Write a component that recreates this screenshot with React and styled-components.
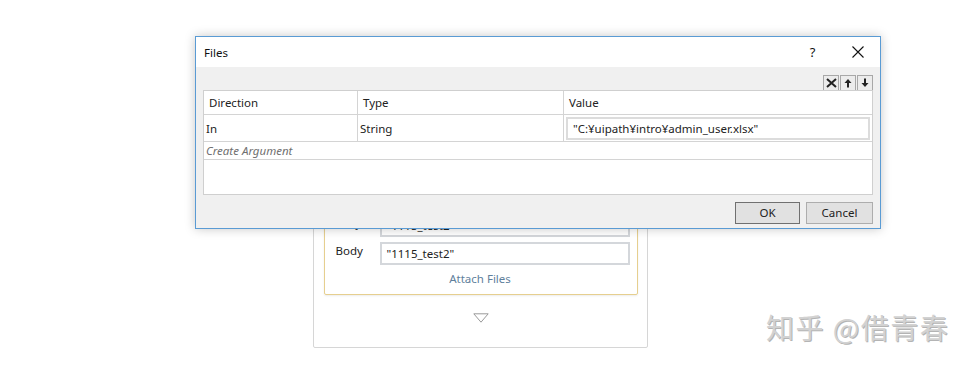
import styled, { createGlobalStyle } from 'styled-components'

const Global = createGlobalStyle`
  body { margin: 0; background: #fff; font-family: "Noto Sans", "Open Sans", sans-serif; }
`

const Page = styled.div`
  position: relative;
  width: 974px;
  height: 366px;
  overflow: hidden;
  background: #fff;
`

const Designer = styled.div`
  display: flex;
  padding: 190px 0 0 313px;
`

const Activity = styled.div`
  width: 335px;
  height: 158px;
  border: 1px solid #d6d6d6;
  border-radius: 2px;
  padding: 4px 10px 0 10px;
  box-sizing: border-box;
  display: flex;
  flex-direction: column;
  align-items: center;
`

const Inner = styled.div`
  width: 314px;
  border: 1px solid #e6cf8f;
  border-radius: 2px;
  box-sizing: border-box;
  padding: 18px 6px 8px 11px;
  display: flex;
  flex-direction: column;
  gap: 5px;
  box-shadow: 0 1px 2px rgba(0,0,0,0.08);
`

const FieldRow = styled.div`
  display: flex;
  align-items: center;
`

const FieldLabel = styled.div`
  width: 44px;
  font-size: 11.5px;
  color: #222;
  margin-top: -6px;
`

const FieldInput = styled.div`
  width: 250px;
  height: 23px;
  box-sizing: border-box;
  border: 2px solid #d4d7db;
  padding: 0 5px;
  font-size: 11.5px;
  line-height: 19px;
  color: #222;
`

const LinkText = styled.div`
  text-align: center;
  font-size: 11.5px;
  color: #5f7f9c;
  padding: 1px 6px 0 0;
`

const Arrow = styled.div`
  margin-top: 18px;
  display: flex;
  justify-content: center;
`

const Dialog = styled.div`
  position: absolute;
  left: 195px;
  top: 36px;
  width: 686px;
  height: 193px;
  box-sizing: border-box;
  border: 1px solid #5a9bd4;
  background: #f0f0f0;
  box-shadow: 0 0 10px rgba(0,0,0,0.22);
  display: flex;
  flex-direction: column;
`

const TitleBar = styled.div`
  height: 30px;
  background: #fff;
  display: flex;
  align-items: center;
  padding: 0 0 0 8px;
  font-size: 11.5px;
  color: #111;
`

const Title = styled.div`
  flex: 1;
`

const TitleBtn = styled.div`
  width: 45px;
  height: 30px;
  display: flex;
  align-items: center;
  justify-content: center;
  font-size: 13px;
`

const Body = styled.div`
  flex: 1;
  padding: 8px 7px 5px 7px;
  display: flex;
  flex-direction: column;
`

const Tools = styled.div`
  display: flex;
  justify-content: flex-end;
  gap: 1px;
  height: 15px;
`

const ToolBtn = styled.div`
  width: 14px;
  height: 14px;
  border: 1px solid #a8a8a8;
  background: #ececec;
  display: flex;
  align-items: center;
  justify-content: center;
`

const Table = styled.div`
  height: 103px;
  border: 1px solid #cfcfcf;
  background: #fff;
  display: grid;
  grid-template-columns: 154px 206px 1fr;
  grid-template-rows: 24px 27px 18px 1fr;
`

const HeadCell = styled.div`
  border-right: ${({ $last }) => ($last ? 'none' : '1px solid #d4d4d4')};
  border-bottom: 1px solid #d4d4d4;
  padding-left: 5px;
  font-size: 11.5px;
  line-height: 24px;
  color: #222;
`

const Cell = styled.div`
  border-right: ${({ $last }) => ($last ? 'none' : '1px solid #d4d4d4')};
  border-bottom: 1px solid #d4d4d4;
  padding-left: 2px;
  font-size: 11.5px;
  color: #222;
  display: flex;
  align-items: center;
`

const ValueBox = styled.div`
  width: 304px;
  height: 23px;
  box-sizing: border-box;
  border: 2px solid #dcdcdc;
  padding-left: 5px;
  font-size: 11.5px;
  line-height: 19px;
`

const CreateRow = styled.div`
  grid-column: 1 / -1;
  border-bottom: 1px solid #d4d4d4;
  padding-left: 2px;
  font-size: 11.5px;
  line-height: 17px;
  font-style: italic;
  color: #707070;
`

const Footer = styled.div`
  display: flex;
  justify-content: flex-end;
  gap: 6px;
  margin-top: 7px;
`

const Button = styled.div`
  width: ${({ $w }) => $w}px;
  height: 22px;
  box-sizing: border-box;
  border: 1px solid ${({ $primary }) => ($primary ? '#707070' : '#adadad')};
  background: #e1e1e1;
  font-size: 11.5px;
  line-height: 20px;
  text-align: center;
  color: #222;
`

const Watermark = styled.div`
  position: absolute;
  left: 766px;
  top: 307px;
  font-family: "Noto Sans CJK SC", sans-serif;
  font-size: 28px;
  letter-spacing: 1.5px;
  color: #d2d2d2;
  text-shadow: 1px 1px 0 #b4b4b4;
`

function Cross() {
  return (
    <svg width="11" height="10" viewBox="0 0 11 10">
      <path d="M1 1 L10 9 M10 1 L1 9" stroke="#222" strokeWidth="2" />
    </svg>
  )
}

function ArrowIcon({ down }) {
  return (
    <svg width="8" height="10" viewBox="0 0 8 10" style={{ transform: down ? 'rotate(180deg)' : 'none' }}>
      <path d="M4 1 L7.5 5 H5 V9.5 H3 V5 H0.5 Z" fill="#222" />
    </svg>
  )
}

export default function App() {
  return (
    <Page>
      <Global />
      <Designer>
        <Activity>
          <Inner>
            <FieldRow>
              <FieldLabel>Subject</FieldLabel>
              <FieldInput>"1115_test2"</FieldInput>
            </FieldRow>
            <FieldRow>
              <FieldLabel>Body</FieldLabel>
              <FieldInput>"1115_test2"</FieldInput>
            </FieldRow>
            <LinkText>Attach Files</LinkText>
          </Inner>
          <Arrow>
            <svg width="16" height="10" viewBox="0 0 16 10">
              <path d="M0.8 0.8 H15.2 L8 9.2 Z" fill="none" stroke="#9a9a9a" strokeWidth="1" />
            </svg>
          </Arrow>
        </Activity>
      </Designer>

      <Dialog>
        <TitleBar>
          <Title>Files</Title>
          <TitleBtn>?</TitleBtn>
          <TitleBtn>
            <svg width="12" height="12" viewBox="0 0 12 12">
              <path d="M0.5 0.5 L11.5 11.5 M11.5 0.5 L0.5 11.5" stroke="#111" strokeWidth="1.1" />
            </svg>
          </TitleBtn>
        </TitleBar>
        <Body>
          <Tools>
            <ToolBtn><Cross /></ToolBtn>
            <ToolBtn><ArrowIcon /></ToolBtn>
            <ToolBtn><ArrowIcon down /></ToolBtn>
          </Tools>
          <Table>
            <HeadCell>Direction</HeadCell>
            <HeadCell>Type</HeadCell>
            <HeadCell $last>Value</HeadCell>
            <Cell>In</Cell>
            <Cell>String</Cell>
            <Cell $last>
              <ValueBox>"C:¥uipath¥intro¥admin_user.xlsx"</ValueBox>
            </Cell>
            <CreateRow>Create Argument</CreateRow>
          </Table>
          <Footer>
            <Button $w={65} $primary>OK</Button>
            <Button $w={67}>Cancel</Button>
          </Footer>
        </Body>
      </Dialog>

      <Watermark>知乎 @借青春</Watermark>
    </Page>
  )
}
